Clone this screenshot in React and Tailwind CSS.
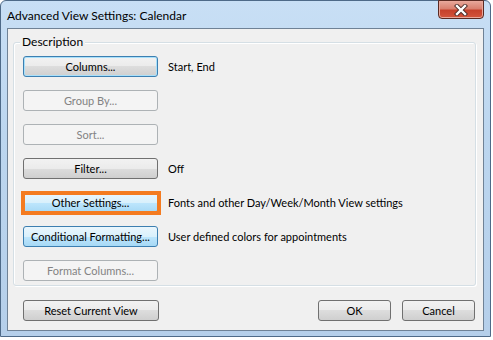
import React from 'react'

const FONT = "font-['Lato','Liberation_Sans',sans-serif]"

function Btn({ children, kind = 'normal', className = '' }) {
  const kinds = {
    normal:
      'border-[#707070] text-black bg-[linear-gradient(to_bottom,#f2f2f2_0%,#ebebeb_50%,#dddddd_50%,#cfcfcf_100%)]',
    focus:
      'border-[#3c7fb1] text-black shadow-[inset_0_0_0_1px_#a9e0fa] bg-[linear-gradient(to_bottom,#f2f2f2_0%,#ebebeb_50%,#dddddd_50%,#cfcfcf_100%)]',
    hot:
      'border-[#3c7fb1] text-black bg-[linear-gradient(to_bottom,#eaf6fd_0%,#d9f0fc_50%,#bee6fd_50%,#a7d9f5_100%)]',
    disabled: 'border-[#adb2b5] text-[#838383] bg-[#f4f4f4]',
  }
  return (
    <div
      className={`h-[21px] flex items-center justify-center rounded-[3px] border ${kinds[kind]} ${className}`}
    >
      {children}
    </div>
  )
}

function Row({ label, kind, text, marked }) {
  return (
    <div className="flex items-center gap-[10px]">
      <div className="relative">
        <Btn kind={kind} className="w-[135px]">
          {label}
        </Btn>
        {marked && (
          <span className="absolute -left-[2px] -top-[1px] w-[140px] h-[24px] border-4 border-[#f47b20]" />
        )}
      </div>
      {text && <span className="text-black">{text}</span>}
    </div>
  )
}

export default function App() {
  const rows = [
    { label: 'Columns...', kind: 'focus', text: 'Start, End' },
    { label: 'Group By...', kind: 'disabled' },
    { label: 'Sort...', kind: 'disabled' },
    { label: 'Filter...', kind: 'normal', text: 'Off' },
    { label: 'Other Settings...', kind: 'hot', text: 'Fonts and other Day/Week/Month View settings', marked: true },
    { label: 'Conditional Formatting...', kind: 'hot', text: 'User defined colors for appointments' },
    { label: 'Format Columns...', kind: 'disabled' },
  ]

  return (
    <div className={`w-[493px] h-[340px] bg-white text-[11px] leading-none ${FONT}`}>
      <div className="w-[491px] h-[337px] flex flex-col rounded-t-[6px] border border-[#4e6a88] bg-[linear-gradient(to_bottom,#c8dff5_0%,#bcd6ef_40%,#b5cfea_100%)]">
        {/* Title bar */}
        <div className="h-[28px] flex items-start justify-between pl-[6px] pr-[6px]">
          <span className="pt-[9px] text-black text-[12px]">Advanced View Settings: Calendar</span>
          <div className="w-[46px] h-[19px] -mt-[1px] flex items-center justify-center rounded-b-[4px] border border-[#5a2a22] shadow-[inset_0_0_0_1px_#e9a79a] bg-[linear-gradient(to_bottom,#e8a89b_0%,#d9806f_45%,#c6412b_55%,#d3553c_100%)]">
            <svg width="14" height="12" viewBox="0 0 14 12">
              <path d="M3 2 L11 10 M11 2 L3 10" stroke="#4a2a26" strokeWidth="4.2" strokeLinecap="square" />
              <path d="M3 2 L11 10 M11 2 L3 10" stroke="#ffffff" strokeWidth="2.4" strokeLinecap="square" />
            </svg>
          </div>
        </div>

        {/* Client area */}
        <div className="ml-[6px] mr-[6px] flex-1 mb-[5px] border border-[#6f8296] bg-[#f0f0f0] flex flex-col pl-[5px] pr-[7px] pt-[13px] pb-[9px]">
          <div className="relative border border-[#d5dfe5] shadow-[inset_1px_1px_0_#ffffff,1px_1px_0_#ffffff] rounded-[3px] pt-[13px] pb-[4px] pl-[9px] flex flex-col gap-[13px]">
            <span className="absolute left-[6px] -top-[7px] px-[2px] bg-[#f0f0f0] text-black text-[12px]">Description</span>
            {rows.map((r) => (
              <Row key={r.label} {...r} />
            ))}
          </div>

          <div className="mt-[14px] flex items-center pl-[10px] pr-[1px]">
            <Btn className="w-[136px]">Reset Current View</Btn>
            <div className="flex-1" />
            <Btn className="w-[73px]">OK</Btn>
            <Btn className="w-[73px] ml-[11px]">Cancel</Btn>
          </div>
        </div>
      </div>
    </div>
  )
}
